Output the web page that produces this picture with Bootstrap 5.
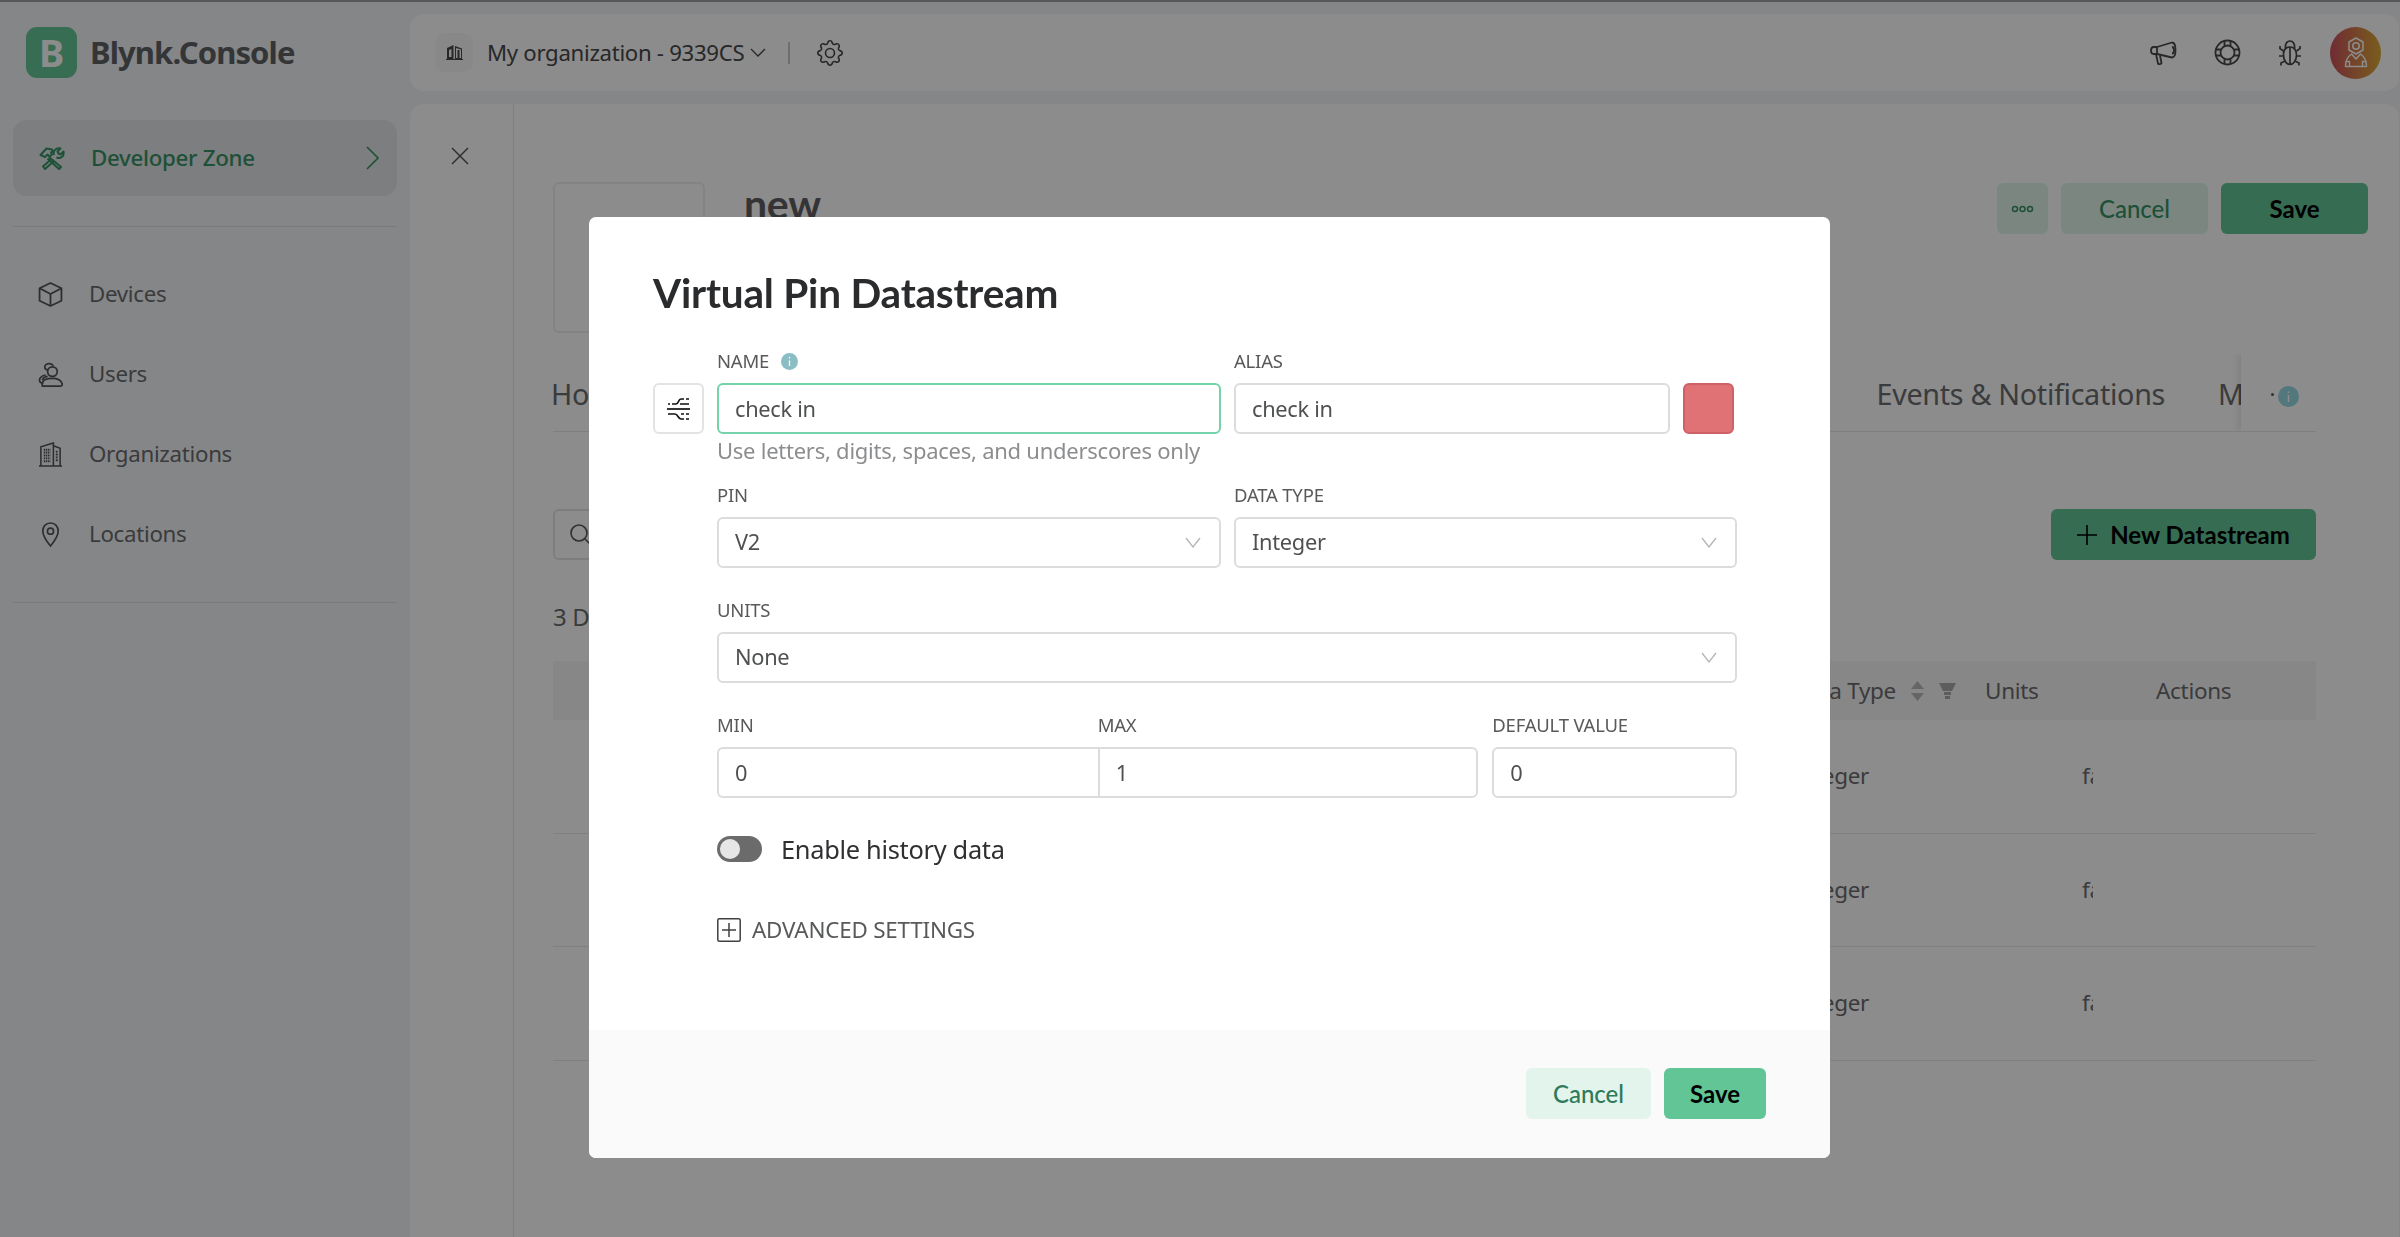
<!DOCTYPE html>
<html lang="en">

<head>
    <meta charset="utf-8">
    <meta name="viewport" content="width=device-width, initial-scale=1">
    <title>Blynk.Console</title>
    <link href="https://cdn.jsdelivr.net/npm/bootstrap@5.3.3/dist/css/bootstrap.min.css" rel="stylesheet">
    <style>
        html, body {
            height: 100%;
        }

        body {
            background-color: #f2f4f7;
            border-top: 2px solid #9b9ea3;
            color: #6b6c6e;
            font-family: "Noto Sans", "DejaVu Sans", sans-serif;
            font-size: 22.3px;
            overflow: hidden;
            letter-spacing: -0.3px;
        }

        svg {
            display: block;
            flex-shrink: 0;
        }

        .modal-backdrop {
            --bs-backdrop-opacity: .45;
        }

        /* left column */
        .dz-side {
            width: 410px;
            flex-shrink: 0;
        }

        .dz-logo-row {
            height: 118px;
            padding: 25px 0 0 26px;
        }

        .dz-logo {
            width: 51px;
            height: 51px;
            border-radius: 11px;
            background: #64c695;
            color: #fff;
            font: 700 38px/51px "Noto Sans", sans-serif;
            text-align: center;
        }

        .dz-brand {
            height: 51px;
            color: #606265;
            font-size: 31px;
            font-weight: 700;
            margin-left: 13px;
            letter-spacing: -0.9px;
        }

        .dz-active {
            margin: 0 13px;
            height: 76px;
            border-radius: 14px;
            background: #e3e5e8;
            color: #389366;
            font-weight: 500;
            padding: 0 18px 0 26px;
        }

        .dz-rule {
            margin: 30px 13px 0;
            border-top: 1px solid #dfe1e4;
        }

        .dz-rule-end {
            margin-top: 28px;
        }

        .dz-sidelist {
            padding-top: 27px;
        }

        .dz-sideitem {
            height: 80px;
            padding-left: 38px;
        }

        .dz-sideitem span,
        .dz-active span {
            margin-left: 26px;
        }

        .dz-sideitem svg {
            width: 25px;
            height: 25px;
        }

        /* top bar and panel */
        .dz-main {
            min-width: 0;
            padding: 12px 1px 0 0;
        }

        .dz-top {
            height: 77px;
            background: #fff;
            border-radius: 14px;
            padding: 0 18px 0 25px;
            margin-bottom: 13px;
            color: #48494b;
        }

        .dz-orgicon {
            width: 38px;
            height: 39px;
            border-radius: 10px;
            background: #f8f8f9;
        }

        .dz-orgname {
            margin-left: 14px;
            font-size: 22.2px;
        }

        .dz-orgchev {
            margin-left: 6px;
        }

        .dz-sep {
            width: 2px;
            height: 22px;
            background: #c8c9cb;
            margin: 0 27px 0 22px;
        }

        .dz-megaphone {
            margin-right: 37px;
        }

        .dz-bug {
            margin-left: 37.500px;
        }

        .dz-avatar {
            width: 51px;
            height: 52px;
            margin-left: 28px;
            border-radius: 50%;
            background: linear-gradient(90deg, #cc5060, #dcaa34);
        }

        .dz-panel {
            background: #fff;
            border-radius: 14px 14px 0 0;
            min-height: 0;
        }

        .dz-strip {
            width: 104px;
            flex-shrink: 0;
            border-right: 1px solid #e6e7e8;
            padding: 43px 0 0 41px;
            color: #55565a;
        }

        .dz-content {
            min-width: 0;
            padding: 78px 31px 0 39px;
        }

        .dz-imgbox {
            width: 152px;
            height: 151px;
            border: 2px solid #efefef;
            border-radius: 6px;
        }

        .dz-devname {
            margin: -3px 0 0 39px;
            color: #5f6063;
            font: 700 41px "Lato", sans-serif;
        }

        .dz-btnset {
            height: 51px;
            gap: 13px;
            margin-top: 1px;
        }

        .dz-btn {
            height: 51px;
            border: 0;
            border-radius: 6px;
            padding: 0;
            font: 500 24px "Lato", sans-serif;
            display: flex;
            align-items: center;
            justify-content: center;
        }

        .dz-soft {
            background: #e2f4ec;
            color: #389366;
        }

        .dz-solid {
            background: #62c595;
            color: #000;
            font-weight: 700;
        }

        .dz-w147 {
            width: 147px;
        }

        .dz-dots {
            width: 51px;
        }

        .dz-lower {
            margin-right: 52px;
        }

        .dz-tabs {
            height: 78px;
            margin-top: 21px;
            border-bottom: 1px solid #e6e7e8;
            font-size: 28.700px;
        }

        .dz-tabs>span,
        .dz-tabclip {
            align-self: flex-end;
            padding-bottom: 16px;
            white-space: nowrap;
        }

        .dz-tabs>.dz-home {
            margin-left: -2px;
        }

        .dz-tabclip {
            width: 23px;
            margin-left: 53px;
            overflow: hidden;
        }

        .dz-tabmore {
            width: 75px;
            box-shadow: -4px 0 6px rgba(0, 0, 0, .08);
            padding: 32px 0 0 30px;
            clip-path: inset(0 0 0 -12px);
            gap: 4px;
        }

        .dz-tabdot {
            width: 3px;
            height: 3px;
            margin-top: 7px;
            background: #55565a;
            border-radius: 50%;
        }

        .dz-toolbar {
            margin-top: 77px;
        }

        .dz-search {
            width: 340px;
            height: 51px;
            border: 2px solid #e3e3e3;
            border-radius: 6px;
            padding-left: 14px;
        }

        .dz-new {
            width: 265px;
            gap: 13px;
        }

        .dz-count {
            margin-top: 42px;
            height: 30px;
            line-height: 30px;
            font-size: 24px;
        }

        .dz-table {
            margin-top: 29px;
            font-size: 22.500px;
        }

        .dz-tr {
            display: grid;
            grid-template-columns: 1240px 192px 97px 74px 64px 97px;
            align-items: center;
            height: 113.500px;
            border-bottom: 1px solid #e9e9e9;
            white-space: nowrap;
        }

        .dz-thead {
            height: 59px;
            background: #f6f6f6;
            border-bottom: 0;
        }

        .dz-sortcol {
            display: flex;
            align-items: center;
            gap: 15px;
        }

        .dz-clip {
            width: 11px;
            overflow: hidden;
        }

        /* dialog */
        .dz-dialog {
            width: 1241px;
            max-width: none;
            margin: 217px 0 0 589px;
        }

        .dz-dialog .modal-content {
            border: 0;
            border-radius: 7px;
            color: #4f5052;
        }

        .dz-dialog .modal-body {
            padding: 53px 93px 88px 64px;
        }

        .dz-title {
            height: 46px;
            margin: 0 0 33px;
            color: #2a2b2d;
            font: 700 40.500px/46px "Lato", sans-serif;
            letter-spacing: -0.2px;
        }

        .dz-label {
            display: block;
            height: 24px;
            line-height: 24px;
            margin-bottom: 10px;
            color: #58595b;
            font-size: 18.500px;
            letter-spacing: -0.2px;
        }

        .dz-dialog .form-control,
        .dz-dialog .form-select {
            height: 51px;
            border: 2px solid #dcdcdc;
            border-radius: 6px;
            box-shadow: none;
            color: #4f5052;
            font-size: 21.800px;
            letter-spacing: -0.3px;
            padding: 0 16px;
        }

        .dz-dialog .form-select {
            background-image: url("data:image/svg+xml,%3csvg xmlns='http://www.w3.org/2000/svg' viewBox='0 0 16 11'%3e%3cpath fill='none' stroke='%23b5b5b5' stroke-width='1.3' d='M1 1l7 9 7-9'/%3e%3c/svg%3e");
            background-size: 16px 11px;
            background-position: right 18px center;
        }

        .dz-streambtn {
            width: 51px;
            height: 51px;
            margin-right: 13px;
            border: 2px solid #e3e3e3;
            border-radius: 6px;
            background: #fff;
            color: #111;
        }

        .dz-wname {
            width: 504px;
        }

        .dz-walias {
            width: 436px;
            margin-left: 13px;
        }

        .dz-swatch {
            width: 51px;
            height: 51px;
            margin-left: 13px;
            border: 2px solid #cd6167;
            border-radius: 6px;
            background: #e07174;
        }

        .dz-dialog .dz-focus {
            border-color: #74d3ab;
        }

        .dz-infosmall {
            margin-left: 12px;
        }

        .dz-help {
            height: 26px;
            line-height: 26px;
            margin-top: 3px;
            color: #8c8d8f;
            font-size: 22px;
            letter-spacing: -0.25px;
        }

        .dz-indent {
            margin-left: 64px;
        }

        .dz-pinrow {
            margin-top: 20px;
        }

        .dz-gapl {
            margin-left: 13px;
        }

        .dz-unitrow {
            margin-top: 30px;
        }

        .dz-rangerow {
            margin-top: 29.500px;
        }

        .dz-wmin {
            width: 381px;
        }

        .dz-wdef {
            width: 245px;
            margin-left: 14px;
        }

        .dz-dialog .dz-joinl {
            border-top-right-radius: 0;
            border-bottom-right-radius: 0;
            border-right: 0;
        }

        .dz-dialog .dz-joinr {
            border-top-left-radius: 0;
            border-bottom-left-radius: 0;
            padding-left: 16px;
        }

        .dz-switch {
            min-height: 26px;
            padding: 0;
            margin: 38px 0 0;
        }

        .dz-switch .form-check-input {
            width: 45px;
            height: 26px;
            margin: 0;
            border: 0;
            background-color: #6b6b6b;
            background-image: url("data:image/svg+xml,%3csvg xmlns='http://www.w3.org/2000/svg' viewBox='-4 -4 8 8'%3e%3ccircle r='3.1' fill='%23e6e6e6'/%3e%3c/svg%3e");
        }

        .dz-switch label {
            margin-left: 19px;
            color: #2f3032;
            font-size: 25.400px;
            line-height: 26px;
        }

        .dz-advanced {
            margin-top: 56px;
            height: 24px;
            gap: 11px;
            color: #58595b;
            font-size: 22.400px;
            letter-spacing: -0.2px;
        }

        .dz-dialog .modal-footer {
            height: 128px;
            padding: 0 64px 0 0;
            border: 0;
            background: #fafafa;
            gap: 13px;
            border-radius: 0 0 7px 7px;
        }

        .dz-dialog .modal-footer>* {
            margin: 0;
        }

        .dz-dialog .dz-soft {
            color: #2f7a5a;
        }

        .dz-w125 {
            width: 125px;
        }

        .dz-w102 {
            width: 102px;
        }
    </style>
</head>

<body class="d-flex">
    <aside class="dz-side">
        <div class="dz-logo-row d-flex">
            <div class="dz-logo">B</div>
            <div class="dz-brand d-flex align-items-center">Blynk.Console</div>
        </div>
        <div class="dz-active d-flex align-items-center">
            <svg width="26" height="24" viewBox="0 0 26 24" fill="none" stroke="currentColor" stroke-width="2" stroke-linejoin="round">
                <path d="M1.500 9l6-6.500 5.500 1 1 2-2 1 1 2-2.500 2-2-2-2.500 2.500z" />
                <path d="M10 11l12 10-2 2L8.500 12.500" />
                <path d="M12.500 13L4 20.500l2 2.500 9-8" />
                <path d="M15 9c-1.500-4 2-7.500 6.500-6.500l-3 3 1 2 2 1 3-3c1 5-3 7.500-7 6" />
            </svg>
            <span>Developer Zone</span>
            <svg class="ms-auto" width="13" height="24" viewBox="0 0 13 24" fill="none" stroke="currentColor" stroke-width="1.600">
                <path d="M1 1l11 11L1 23" />
            </svg>
        </div>
        <div class="dz-rule"></div>
        <div class="dz-sidelist">
            <div class="dz-sideitem d-flex align-items-center">
                <svg viewBox="0 0 24 24" fill="none" stroke="#525356" stroke-width="1.700" stroke-linejoin="round">
                    <path d="M12 1l10.500 5v12L12 23 1.500 18V6z" />
                    <path d="M1.500 6L12 11.500 22.500 6M12 11.500V23" />
                </svg>
                <span>Devices</span>
            </div>
            <div class="dz-sideitem d-flex align-items-center">
                <svg viewBox="0 0 26 26" fill="none" stroke="#525356" stroke-width="1.800" stroke-linejoin="round">
                    <ellipse cx="15" cy="10" rx="5" ry="5" />
                    <path d="M10.500 8.500C7 8 6 5 8 3c2-2 6-2 8 1" />
                    <path d="M8 13.500c-3 .5-6 2.500-6.500 5 0 2 1.500 3.500 4 3.500" />
                    <path d="M4.500 25h19c1.500 0 2-1 1.500-2.500-1-3.500-5-5.500-10-5.500-6 0-10 2-10.500 5-.3 1.500 0 3 0 3z" />
                    <path d="M10 15c-3 .5-5 2-5.500 4" />
                </svg>
                <span>Users</span>
            </div>
            <div class="dz-sideitem d-flex align-items-center">
                <svg viewBox="0 0 26 26" fill="none" stroke="#525356" stroke-width="1.600">
                    <path d="M3 25V5l13-4v24M16 4l7 2.500V25M1 25h24" />
                    <path d="M6 8h7M6 11h7M6 14h7M6 17h7M6 20h7" stroke-width="2" stroke-dasharray="1.500 .7" />
                    <path d="M19.500 9v12" stroke-width="2" stroke-dasharray="2 1" />
                </svg>
                <span>Organizations</span>
            </div>
            <div class="dz-sideitem d-flex align-items-center">
                <svg viewBox="0 0 24 26" fill="none" stroke="#525356" stroke-width="1.700">
                    <path d="M12 1C7 1 4 4.800 4 9.500 4 15 12 25 12 25s8-10 8-15.500C20 4.800 17 1 12 1z" />
                    <circle cx="12" cy="9.500" r="3.200" />
                </svg>
                <span>Locations</span>
            </div>
        </div>
        <div class="dz-rule dz-rule-end"></div>
    </aside>

    <div class="dz-main flex-grow-1 d-flex flex-column">
        <header class="dz-top d-flex align-items-center">
            <div class="dz-orgicon d-flex align-items-center justify-content-center">
                <svg width="17" height="15" viewBox="0 0 17 15" fill="#48494b">
                    <path d="M1 14V3l6.500-3v14zM3 5v7h2.500V4z" fill-rule="evenodd" />
                    <path d="M9 1l7 2.500V14H9zM10 3v10h5V4.500z" fill-rule="evenodd" />
                    <path d="M11.500 5h2v8h-2zM0 14h17v1H0z" />
                </svg>
            </div>
            <span class="dz-orgname">My organization - 9339CS</span>
            <svg class="dz-orgchev" width="16" height="9" viewBox="0 0 16 9" fill="none" stroke="currentColor" stroke-width="1.300">
                <path d="M1 1l7 7 7-7" />
            </svg>
            <div class="dz-sep"></div>
            <svg width="26" height="26" viewBox="0 0 16 16" fill="currentColor">
                <path d="M8 4.754a3.246 3.246 0 1 0 0 6.492 3.246 3.246 0 0 0 0-6.492zM5.754 8a2.246 2.246 0 1 1 4.492 0 2.246 2.246 0 0 1-4.492 0z" />
                <path d="M9.796 1.343c-.527-1.79-3.065-1.79-3.592 0l-.094.319a.873.873 0 0 1-1.255.52l-.292-.16c-1.64-.892-3.433.902-2.54 2.541l.159.292a.873.873 0 0 1-.52 1.255l-.319.094c-1.79.527-1.79 3.065 0 3.592l.319.094a.873.873 0 0 1 .52 1.255l-.16.292c-.892 1.64.901 3.434 2.541 2.54l.292-.159a.873.873 0 0 1 1.255.52l.094.319c.527 1.79 3.065 1.79 3.592 0l.094-.319a.873.873 0 0 1 1.255-.52l.292.16c1.64.893 3.434-.902 2.54-2.541l-.159-.292a.873.873 0 0 1 .52-1.255l.319-.094c1.79-.527 1.79-3.065 0-3.592l-.319-.094a.873.873 0 0 1-.52-1.255l.16-.292c.893-1.64-.902-3.433-2.541-2.54l-.292.159a.873.873 0 0 1-1.255-.52l-.094-.319zm-2.633.283c.246-.835 1.428-.835 1.674 0l.094.319a1.873 1.873 0 0 0 2.693 1.115l.291-.16c.764-.415 1.6.42 1.184 1.185l-.159.292a1.873 1.873 0 0 0 1.116 2.692l.318.094c.835.246.835 1.428 0 1.674l-.319.094a1.873 1.873 0 0 0-1.115 2.693l.16.291c.415.764-.42 1.6-1.185 1.184l-.291-.159a1.873 1.873 0 0 0-2.693 1.116l-.094.318c-.246.835-1.428.835-1.674 0l-.094-.319a1.873 1.873 0 0 0-2.692-1.115l-.292.16c-.764.415-1.6-.42-1.184-1.185l.159-.291A1.873 1.873 0 0 0 1.945 8.93l-.319-.094c-.835-.246-.835-1.428 0-1.674l.319-.094A1.873 1.873 0 0 0 3.06 4.377l-.16-.292c-.415-.764.42-1.6 1.185-1.184l.292.159a1.873 1.873 0 0 0 2.692-1.115l.094-.319z" />
            </svg>
            <div class="ms-auto d-flex align-items-center">
                <svg class="dz-megaphone" width="27" height="24" viewBox="0 0 27 24" fill="none" stroke="currentColor" stroke-width="1.800" stroke-linejoin="round">
                    <path d="M7 6l15-4.500c2 0 3.500 3 3.500 7.500s-1.500 7.500-3.500 7.500L7 13z" />
                    <path d="M7 6H3.500C2 6 1 7 1 9.500S2 13 3.500 13H7" />
                    <path d="M22 6c1.500 0 2 1.500 2 3.500s-.5 3-2 3" />
                    <path d="M6 13l2 9.500c.2 1 3.300.8 3.500-.5L10 14.500" />
                </svg>
                <svg width="27" height="27" viewBox="0 0 27 27" fill="none" stroke="currentColor" stroke-width="1.800">
                    <circle cx="13.500" cy="13.500" r="12" />
                    <circle cx="13.500" cy="13.500" r="7" />
                    <path d="M10.500 1.800v5M16.500 1.800v5M10.500 20.200v5M16.500 20.200v5M1.800 10.500h5M1.800 16.500h5M20.200 10.500h5M20.200 16.500h5" />
                </svg>
                <svg class="dz-bug" width="24" height="26" viewBox="0 0 24 26" fill="none" stroke="currentColor" stroke-width="1.700">
                    <path d="M12 7c-4 0-6.500 3-6.500 8 0 5.500 3 9.500 6.500 9.500s6.500-4 6.500-9.500c0-5-2.500-8-6.500-8zM12 7v17.500" />
                    <path d="M7.500 8.500C7 4 9 1 12 1s5 3 4.500 7.500" />
                    <path d="M5.500 11L2 8.500V6M18.500 11L22 8.500V6M5.500 16H1M18.500 16H23M7 21l-4 2v2.500M17 21l4 2v2.500" />
                </svg>
                <div class="dz-avatar d-flex align-items-center justify-content-center">
                    <svg width="24" height="31" viewBox="0 0 24 31" fill="none" stroke="#fff" stroke-width="1.500" stroke-linejoin="round">
                        <path d="M12 1l7 4v8l-7 4-7-4V5z" />
                        <circle cx="12" cy="9" r="3.200" />
                        <path d="M7.500 17C4 19.500 1.500 23 1.500 29.500h21c0-6.500-2.500-10-6-12.500L12 22z" />
                        <path d="M1.500 24.500h4v5M22.500 24.500h-4v5" />
                    </svg>
                </div>
            </div>
        </header>

        <section class="dz-panel flex-grow-1 d-flex">
            <div class="dz-strip">
                <svg width="18" height="18" viewBox="0 0 18 18" fill="none" stroke="currentColor" stroke-width="1.500">
                    <path d="M1 1l16 16M17 1L1 17" />
                </svg>
            </div>
            <div class="dz-content flex-grow-1">
                <div class="d-flex">
                    <div class="dz-imgbox"></div>
                    <div class="dz-devname">new</div>
                    <div class="dz-btnset ms-auto d-flex">
                        <button class="dz-btn dz-soft dz-dots" type="button">
                            <svg width="23" height="8" viewBox="0 0 23 8" fill="none" stroke="currentColor" stroke-width="1.500">
                                <circle cx="4" cy="4" r="2.500" />
                                <circle cx="11.500" cy="4" r="2.500" />
                                <circle cx="19" cy="4" r="2.500" />
                            </svg>
                        </button>
                        <button class="dz-btn dz-soft dz-w147" type="button">Cancel</button>
                        <button class="dz-btn dz-solid dz-w147" type="button">Save</button>
                    </div>
                </div>

                <div class="dz-lower">
                    <div class="dz-tabs d-flex">
                        <span class="dz-home">Home</span>
                        <span class="ms-auto">Events &amp; Notifications</span>
                        <div class="dz-tabclip">Metadata</div>
                        <div class="dz-tabmore d-flex">
                            <div class="dz-tabdot"></div>
                            <svg width="21" height="21" viewBox="0 0 21 21">
                                <circle cx="10.500" cy="10.500" r="10.500" fill="#95dbe5" />
                                <path d="M10.500 9v7M10.500 5.500v1.500" stroke="#fff" stroke-width="1.500" />
                            </svg>
                        </div>
                    </div>

                    <div class="dz-toolbar d-flex justify-content-between">
                        <div class="dz-search d-flex align-items-center">
                            <svg width="24" height="24" viewBox="0 0 24 24" fill="none" stroke="#55565a" stroke-width="1.600">
                                <circle cx="10" cy="10" r="8" />
                                <path d="M16 16l7 7" />
                            </svg>
                        </div>
                        <button class="dz-btn dz-solid dz-new" type="button">
                            <svg width="20" height="20" viewBox="0 0 20 20" stroke="#000" stroke-width="1.600">
                                <path d="M10 0v20M0 10h20" />
                            </svg>
                            New Datastream
                        </button>
                    </div>

                    <div class="dz-count">3 Datastreams</div>

                    <div class="dz-table">
                        <div class="dz-tr dz-thead">
                            <div></div>
                            <div class="dz-sortcol">
                                <span>Data Type</span>
                                <svg width="13" height="20" viewBox="0 0 13 20" fill="#b9b9b9">
                                    <path d="M6.500 0L13 8H0zM0 12h13l-6.500 8z" />
                                </svg>
                                <svg width="17" height="16" viewBox="0 0 17 16" fill="#a9a9a9">
                                    <path d="M0 0h17l-4 8H4zM5 9h7v3H5zM6 13h5v3H6z" />
                                </svg>
                            </div>
                            <div>Units</div>
                            <div></div>
                            <div>Actions</div>
                        </div>
                        <div class="dz-tr">
                            <div></div>
                            <div>Integer</div>
                            <div></div>
                            <div class="dz-clip">false</div>
                        </div>
                        <div class="dz-tr">
                            <div></div>
                            <div>Integer</div>
                            <div></div>
                            <div class="dz-clip">false</div>
                        </div>
                        <div class="dz-tr">
                            <div></div>
                            <div>Integer</div>
                            <div></div>
                            <div class="dz-clip">false</div>
                        </div>
                    </div>
                </div>
            </div>
        </section>
    </div>

    <div class="modal-backdrop show"></div>
    <div class="modal d-block" tabindex="-1">
        <div class="modal-dialog dz-dialog">
            <div class="modal-content">
                <div class="modal-body">
                    <h2 class="dz-title">Virtual Pin Datastream</h2>

                    <div class="d-flex">
                        <div class="d-flex flex-column justify-content-end">
                            <button class="dz-streambtn d-flex align-items-center justify-content-center p-0" type="button">
                                <svg width="23" height="24" viewBox="0 0 23 24" fill="none" stroke="currentColor" stroke-width="1.700">
                                    <path d="M0 12h23" />
                                    <path d="M1 7h2M5 7h4c3 0 2-5 5-5h3M19 2h3M13 7h9" />
                                    <path d="M1 17h7c3 0 3 5 6 5h3M19 22h3M14 17h3M19 17h3" />
                                </svg>
                            </button>
                        </div>
                        <div class="dz-wname">
                            <label class="dz-label d-flex align-items-center">NAME
                                <svg class="dz-infosmall" width="17" height="17" viewBox="0 0 17 17">
                                    <circle cx="8.500" cy="8.500" r="8.500" fill="#8abdc4" />
                                    <path d="M8.500 7.500v5.500M8.500 4v1.500" stroke="#fff" stroke-width="1.300" />
                                </svg>
                            </label>
                            <input class="form-control dz-focus" type="text" value="check in">
                        </div>
                        <div class="dz-walias">
                            <label class="dz-label">ALIAS</label>
                            <input class="form-control" type="text" value="check in">
                        </div>
                        <div class="d-flex flex-column justify-content-end">
                            <div class="dz-swatch"></div>
                        </div>
                    </div>

                    <div class="dz-indent">
                        <div class="dz-help">Use letters, digits, spaces, and underscores only</div>

                        <div class="dz-pinrow d-flex">
                            <div class="dz-wname">
                                <label class="dz-label">PIN</label>
                                <select class="form-select">
                                    <option>V2</option>
                                </select>
                            </div>
                            <div class="flex-grow-1 dz-gapl">
                                <label class="dz-label">DATA TYPE</label>
                                <select class="form-select">
                                    <option>Integer</option>
                                </select>
                            </div>
                        </div>

                        <div class="dz-unitrow">
                            <label class="dz-label">UNITS</label>
                            <select class="form-select">
                                <option>None</option>
                            </select>
                        </div>

                        <div class="dz-rangerow d-flex">
                            <div class="dz-wmin">
                                <label class="dz-label">MIN</label>
                                <input class="form-control dz-joinl" type="text" value="0">
                            </div>
                            <div class="dz-wmin">
                                <label class="dz-label">MAX</label>
                                <input class="form-control dz-joinr" type="text" value="1">
                            </div>
                            <div class="dz-wdef">
                                <label class="dz-label">DEFAULT VALUE</label>
                                <input class="form-control" type="text" value="0">
                            </div>
                        </div>

                        <div class="form-check form-switch dz-switch d-flex align-items-center">
                            <input class="form-check-input" type="checkbox" role="switch" id="historySwitch">
                            <label for="historySwitch">Enable history data</label>
                        </div>

                        <div class="dz-advanced d-flex align-items-center">
                            <svg width="24" height="24" viewBox="0 0 24 24" fill="none" stroke="#3f4042" stroke-width="1.500">
                                <rect x=".8" y=".8" width="22.400" height="22.400" rx="1.500" />
                                <path d="M12 5v14M5 12h14" />
                            </svg>
                            ADVANCED SETTINGS
                        </div>
                    </div>
                </div>
                <div class="modal-footer">
                    <button class="dz-btn dz-soft dz-w125" type="button">Cancel</button>
                    <button class="dz-btn dz-solid dz-w102" type="button">Save</button>
                </div>
            </div>
        </div>
    </div>

    <script src="https://cdn.jsdelivr.net/npm/bootstrap@5.3.3/dist/js/bootstrap.bundle.min.js"></script>
</body>

</html>
